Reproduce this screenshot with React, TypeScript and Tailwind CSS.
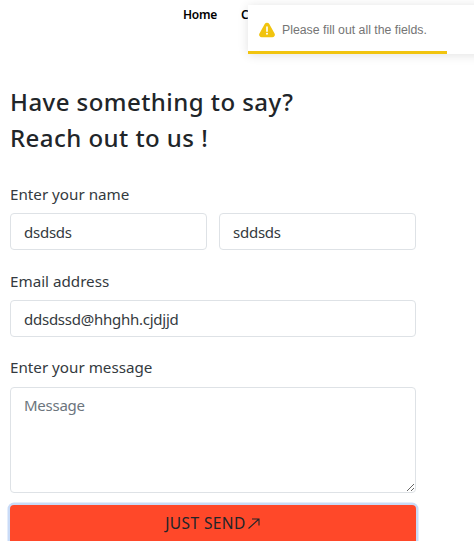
const font = { fontFamily: '"Noto Sans", "Open Sans", sans-serif' }

function Field({ value, placeholder }: { value?: string; placeholder?: string }) {
  return (
    <input
      readOnly
      value={value}
      placeholder={placeholder}
      className="h-[37px] w-full min-w-0 rounded-[4px] border border-[#dee2e6] bg-white px-[13px] text-[15px] tracking-[-0.25px] text-[#343a40] outline-none"
    />
  )
}

export default function App() {
  return (
    <div className="relative h-[541px] w-[474px] overflow-hidden bg-white" style={font}>
      <nav className="flex h-[29px] items-center gap-[24px] pl-[183px] text-[12px] font-semibold tracking-[-0.25px] text-black">
        <span>Home</span>
        <span>Contact</span>
      </nav>

      <div className="absolute left-[248px] top-[5px] w-[240px] bg-white shadow-[0_1px_10px_rgba(0,0,0,0.12)]">
        <div className="flex h-[46px] items-center gap-[7px] pl-[11px] pt-[4px] font-['Liberation_Sans'] text-[12.3px] text-[#757575]">
          <svg viewBox="0 0 24 24" className="h-[16px] w-[16px]" fill="#f1c40f">
            <path d="M23.32 17.19 15.44 3.08a3.96 3.96 0 0 0-6.88 0L.68 17.19A3.96 3.96 0 0 0 4.12 23h15.76a3.96 3.96 0 0 0 3.44-5.81ZM12 19a1.5 1.5 0 1 1 0-3 1.5 1.5 0 0 1 0 3Zm1.25-5.2a1.25 1.25 0 0 1-2.5 0V7.5a1.25 1.25 0 0 1 2.5 0Z" />
          </svg>
          <span>Please fill out all the fields.</span>
        </div>
        <div className="h-[3px] w-[199px] bg-[#f1c40f]" />
      </div>

      <div className="ml-[10px] w-[406px]">
        <h1 className="mt-[55px] text-[24px] font-medium leading-[36px] tracking-[0.45px] text-[#212529]">
          Have something to say?
          <br />
          Reach out to us !
        </h1>

        <form className="mt-[26px]">
          <label className="block text-[15.2px] leading-[24px] text-[#343a40]">Enter your name</label>
          <div className="mt-[7px] flex gap-[12px]">
            <Field value="dsdsds" />
            <Field value="sddsds" />
          </div>

          <label className="mt-[19px] block text-[15.2px] leading-[24px] text-[#343a40]">Email address</label>
          <div className="mt-[7px]">
            <Field value="ddsdssd@hhghh.cjdjjd" />
          </div>

          <label className="mt-[18px] block text-[15.2px] leading-[24px] text-[#343a40]">Enter your message</label>
          <textarea
            readOnly
            placeholder="Message"
            className="mt-[8px] block h-[106px] w-full rounded-[4px] border border-[#dee2e6] bg-white px-[13px] py-[6px] text-[15px] tracking-[-0.25px] text-[#343a40] outline-none placeholder:text-[#6c757d]"
          />

          <button
            type="button"
            className="mt-[12px] flex h-[40px] w-full items-center justify-center gap-[2px] rounded-[4px] bg-[#ff4829] pb-[3px] pr-[1px] text-[15.5px] font-normal tracking-[0.4px] text-[#212529] shadow-[0_0_0_2.5px_#c9dbf7]"
          >
            JUST SEND
            <svg viewBox="0 0 12 11" className="h-[11px] w-[12px]" fill="none" stroke="#212529" strokeWidth="1.1">
              <path d="M0.5 10.5 11 1M4 1h7v6.5" />
            </svg>
          </button>
        </form>
      </div>
    </div>
  )
}
